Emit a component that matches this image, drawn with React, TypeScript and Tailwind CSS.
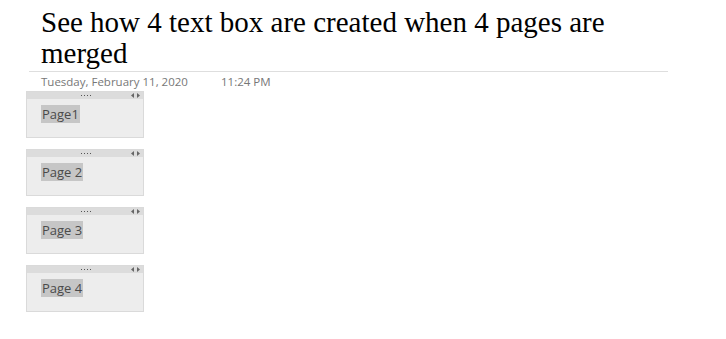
const pages = ["Page1", "Page 2", "Page 3", "Page 4"];

function NoteBox({ label }: { label: string }) {
  return (
    <div className="w-[118px] h-[47px] border border-[#dadada] bg-[#ededed] flex flex-col">
      <div className="h-[7px] bg-[#dcdcdc] relative flex items-center justify-center">
        <span className="flex gap-[2px] ml-[2px]">
          <span className="w-[1px] h-[1px] bg-[#555]" />
          <span className="w-[1px] h-[1px] bg-[#555]" />
          <span className="w-[1px] h-[1px] bg-[#555]" />
          <span className="w-[1px] h-[1px] bg-[#555]" />
        </span>
        <svg
          className="absolute right-[3px] top-[1px]"
          width="9"
          height="5"
          viewBox="0 0 9 5"
        >
          <path d="M3 0 L0 2.5 L3 5 Z" fill="#666" />
          <path d="M6 0 L9 2.5 L6 5 Z" fill="#666" />
        </svg>
      </div>
      <div className="pl-[14px] pt-[6px] flex">
        <span
          className="bg-[#c6c6c6] text-[#4a4a4a] text-[13px] leading-[18px] px-[1px] block"
          style={{ fontFamily: '"Open Sans", "Noto Sans", sans-serif' }}
        >
          {label}
        </span>
      </div>
    </div>
  );
}

export default function App() {
  return (
    <div className="w-[726px] h-[339px] bg-white relative">
      <div className="pl-[29px] pt-[7px] w-[668px]">
        <h1
          className="pl-[12px] text-[29px] leading-[31px] text-black"
          style={{ fontFamily: '"Liberation Serif", Georgia, serif' }}
        >
          See how 4 text box are created when 4 pages are
          <br />
          merged
        </h1>
        <div className="mt-[2px] h-[1px] bg-[#dedede]" />
        <div
          className="pl-[12px] pt-[1px] flex text-[11.5px] leading-[18px] text-[#777]"
          style={{ fontFamily: '"Open Sans", "Noto Sans", sans-serif' }}
        >
          <span className="w-[180px]">Tuesday, February 11, 2020</span>
          <span>11:24 PM</span>
        </div>
      </div>
      <div className="pl-[26px] flex flex-col gap-[11px]">
        {pages.map((p) => (
          <NoteBox key={p} label={p} />
        ))}
      </div>
    </div>
  );
}
